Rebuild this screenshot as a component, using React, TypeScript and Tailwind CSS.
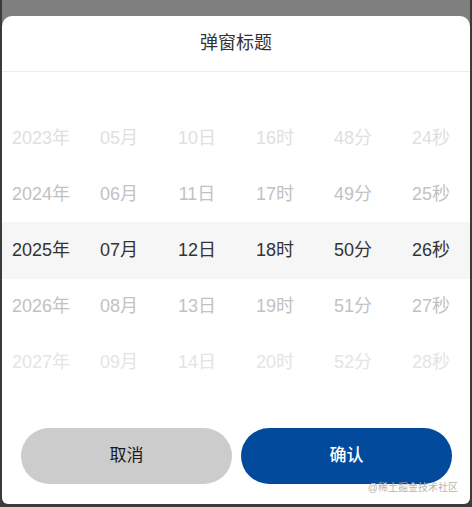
const columns = [
  ["2023年", "2024年", "2025年", "2026年", "2027年"],
  ["05月", "06月", "07月", "08月", "09月"],
  ["10日", "11日", "12日", "13日", "14日"],
  ["16时", "17时", "18时", "19时", "20时"],
  ["48分", "49分", "50分", "51分", "52分"],
  ["24秒", "25秒", "26秒", "27秒", "28秒"],
];

const rowTone = ["text-[#e0e0e0]", "text-[#c2c2c2]", "text-[#333333]", "text-[#c2c2c2]", "text-[#e4e4e4]"];

const font = { fontFamily: '"Liberation Sans", "Noto Sans CJK SC", sans-serif' };

export default function App() {
  return (
    <div className="h-[507px] w-[472px] overflow-hidden bg-[#3b3b3b] px-[2px] pb-[3px]" style={font}>
      <div className="h-full bg-[linear-gradient(#7f7f7f_0_40px,#3b3b3b_40px)] pt-[16px]">
        <div className="relative flex h-full flex-col rounded-t-[10px] rounded-b-[6px] bg-white">
          <div className="flex h-[56px] items-center justify-center border-b border-[#eeeeee] text-[18px] text-[#333333]">
            弹窗标题
          </div>

          <div className="relative py-[38px]">
            <div className="absolute inset-x-0 top-[150px] h-[57px] bg-[#f6f6f6]" />
            <div className="relative grid grid-cols-6">
              {columns.map((col, ci) => (
                <div key={ci} className="flex flex-col">
                  {col.map((label, ri) => (
                    <div
                      key={label}
                      className={`flex h-[56px] items-center justify-center text-[18px] ${rowTone[ri]}`}
                    >
                      {label}
                    </div>
                  ))}
                </div>
              ))}
            </div>
          </div>

          <div className="flex gap-[9px] pl-[19px] pr-[18px]">
            <button className="h-[56px] flex-1 rounded-full bg-[#cccccc] text-[17px] text-[#1a1a1a]">
              取消
            </button>
            <button className="h-[56px] flex-1 rounded-full bg-[#024b9c] text-[17px] font-medium text-white">
              确认
            </button>
          </div>

          <span className="absolute bottom-[11px] right-[12px] text-[10px] leading-none text-[#b4b4b4]">
            @稀土掘金技术社区
          </span>
        </div>
      </div>
    </div>
  );
}
